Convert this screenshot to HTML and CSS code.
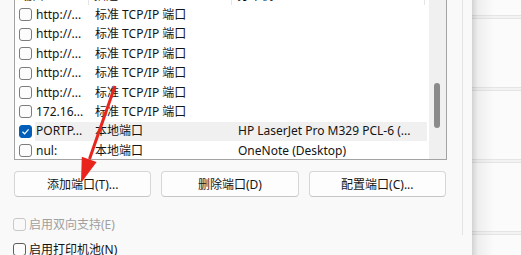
FILE: index.html
```html
<!DOCTYPE html>
<html lang="zh-CN">
<head>
  <meta charset="UTF-8" />
  <meta name="viewport" content="width=device-width, initial-scale=1.0"/>
  <title>打印机属性 - 端口</title>

  <link rel="stylesheet" href="styles.css">
</head>
<body>
  <div class="screen">
    <div class="dialog">
      <div class="page">
        <div class="ports">
          <div class="ports-view">
            <div class="ports-header">
              <div class="col col-name">端口</div>
              <div class="col col-desc">描述</div>
              <div class="col col-printer">打印机</div>
            </div>

            <div class="row">
              <span class="check"></span>
              <div class="row-body">
                <span class="cell cell-name">http://...</span>
                <span class="cell cell-desc">标准 TCP/IP 端口</span>
                <span class="cell cell-printer"></span>
              </div>
            </div>
            <div class="row">
              <span class="check"></span>
              <div class="row-body">
                <span class="cell cell-name">http://...</span>
                <span class="cell cell-desc">标准 TCP/IP 端口</span>
                <span class="cell cell-printer"></span>
              </div>
            </div>
            <div class="row">
              <span class="check"></span>
              <div class="row-body">
                <span class="cell cell-name">http://...</span>
                <span class="cell cell-desc">标准 TCP/IP 端口</span>
                <span class="cell cell-printer"></span>
              </div>
            </div>
            <div class="row">
              <span class="check"></span>
              <div class="row-body">
                <span class="cell cell-name">http://...</span>
                <span class="cell cell-desc">标准 TCP/IP 端口</span>
                <span class="cell cell-printer"></span>
              </div>
            </div>
            <div class="row">
              <span class="check"></span>
              <div class="row-body">
                <span class="cell cell-name">http://...</span>
                <span class="cell cell-desc">标准 TCP/IP 端口</span>
                <span class="cell cell-printer"></span>
              </div>
            </div>
            <div class="row">
              <span class="check"></span>
              <div class="row-body">
                <span class="cell cell-name">172.16...</span>
                <span class="cell cell-desc">标准 TCP/IP 端口</span>
                <span class="cell cell-printer"></span>
              </div>
            </div>
            <div class="row selected">
              <span class="check checked">
                <svg width="9" height="9" viewBox="0 0 9 9" fill="none" stroke="#fff" stroke-width="1.2">
                  <path d="M1.5 4.8 L3.6 6.8 L7.6 2.4" />
                </svg>
              </span>
              <div class="row-body">
                <span class="cell cell-name">PORTP...</span>
                <span class="cell cell-desc">本地端口</span>
                <span class="cell cell-printer">HP LaserJet Pro M329 PCL-6 (...</span>
              </div>
            </div>
            <div class="row">
              <span class="check"></span>
              <div class="row-body">
                <span class="cell cell-name">nul:</span>
                <span class="cell cell-desc">本地端口</span>
                <span class="cell cell-printer">OneNote (Desktop)</span>
              </div>
            </div>
          </div>
          <div class="scrollbar"><div class="thumb"></div></div>
        </div>

        <div class="actions">
          <button>添加端口(T)...</button>
          <button>删除端口(D)</button>
          <button>配置端口(C)...</button>
        </div>

        <div class="options">
          <div class="option disabled">
            <span class="check"></span>
            <span>启用双向支持(E)</span>
          </div>
          <div class="option">
            <span class="check"></span>
            <span>启用打印机池(N)</span>
          </div>
        </div>
      </div>
    </div>

    <div class="backdrop">
      <div class="card"></div>
      <div class="card"></div>
      <div class="card"></div>
      <div class="card"></div>
      <div class="card"></div>
    </div>

    <!-- red annotation arrow drawn over the screenshot -->
    <svg class="arrow" width="521" height="255" viewBox="0 0 521 255">
      <line x1="115" y1="86" x2="89.5" y2="159" stroke="#e8241c" stroke-width="3" />
      <polygon points="81,183 96.6,162 81.8,156.8" fill="#e8241c" />
    </svg>
  </div>
</body>
</html>
```

FILE: styles.css
```css
* {
  margin: 0;
  padding: 0;
  box-sizing: border-box;
}

body {
  font-family: "Noto Sans", "Noto Sans CJK SC", sans-serif;
  font-size: 12px;
  color: #141414;
  background: #f3f3f3;
  overflow: hidden;
}

.screen {
  width: 521px;
  height: 255px;
  display: flex;
  position: relative;
  overflow: hidden;
}

.dialog {
  width: 472px;
  height: 100%;
  background: #f9f9f9;
  flex-shrink: 0;
}

.page {
  width: 463px;
  height: 100%;
  padding-left: 14px;
  border-right: 1px solid #e3e3e3;
  background: #f9f9f9;
}

/* port list */
.ports {
  width: 433px;
  height: 180px;
  margin-top: -20px;
  border: 1px solid #a3a3a3;
  background: #fff;
  display: flex;
  overflow: hidden;
}

.ports-view {
  flex: 1;
  overflow: hidden;
}

.ports-header {
  height: 24.3px;
  display: flex;
  padding-top: 7px;
  line-height: 16px;
  color: #000;
}

.col {
  padding-left: 5px;
  border-right: 1px solid #e5e5e5;
}

.col-name {
  width: 74px;
}

.col-desc {
  width: 143px;
}

.col-printer {
  width: 193px;
}

.row {
  height: 19.4px;
  display: flex;
  align-items: center;
}

.row .check {
  margin-left: 4px;
  margin-right: 3px;
}

.row-body {
  height: 100%;
  flex: 1;
  margin-right: 2px;
  display: flex;
  align-items: center;
  line-height: 16px;
  white-space: nowrap;
}

.row.selected .row-body {
  background: #f0f0f0;
}

.cell {
  overflow: hidden;
}

.cell-name {
  width: 54px;
  padding-left: 1px;
}

.cell-desc {
  width: 143px;
  padding-left: 6px;
}

.cell-printer {
  flex: 1;
  padding-left: 6px;
}

.check {
  width: 13px;
  height: 13px;
  border: 1px solid #7c7c7c;
  border-radius: 3px;
  background: #fcfcfc;
  flex-shrink: 0;
  display: flex;
  align-items: center;
  justify-content: center;
}

.check.checked {
  background: #005fb8;
  border-color: #005fb8;
}

.scrollbar {
  width: 17px;
  background: #f0f0f0;
  padding-top: 102px;
  padding-left: 5px;
}

.thumb {
  width: 6px;
  height: 45px;
  border-radius: 3px;
  background: #8b8b8b;
}

/* buttons */
.actions {
  width: 432px;
  margin-top: 11px;
  display: flex;
  gap: 10px;
}

button {
  flex: 1;
  height: 26px;
  border: 1px solid #d6d6d6;
  border-bottom-color: #c6c6c6;
  border-radius: 4px;
  background: #fdfdfd;
  font-family: inherit;
  font-size: 12px;
  color: #141414;
}

/* options */
.options {
  margin-top: 15px;
  margin-left: -1px;
}

.option {
  height: 25px;
  display: flex;
  align-items: center;
  gap: 3px;
  line-height: 16px;
}

.option .check {
  border-color: #5e5e5e;
}

.option.disabled {
  color: #a0a0a0;
}

.option.disabled .check {
  border-color: #c8c8c8;
  background: #f9f9f9;
}

/* window behind the dialog */
.backdrop {
  flex: 1;
  height: 100%;
  position: relative;
  display: flex;
  flex-direction: column;
  gap: 2px;
  margin-top: -54px;
  background: #f3f3f3;
}

.backdrop::before {
  content: '';
  position: absolute;
  top: 0;
  left: 0;
  bottom: -60px;
  width: 22px;
  background: linear-gradient(to right, rgba(0, 0, 0, 0.16), rgba(0, 0, 0, 0.05) 6px, rgba(0, 0, 0, 0));
}

.card {
  height: 70px;
  flex-shrink: 0;
  background: #fbfbfb;
  border-top: 1px solid #e5e5e5;
  border-bottom: 1px solid #e5e5e5;
}

.arrow {
  position: absolute;
  top: 0;
  left: 0;
  pointer-events: none;
}
```
